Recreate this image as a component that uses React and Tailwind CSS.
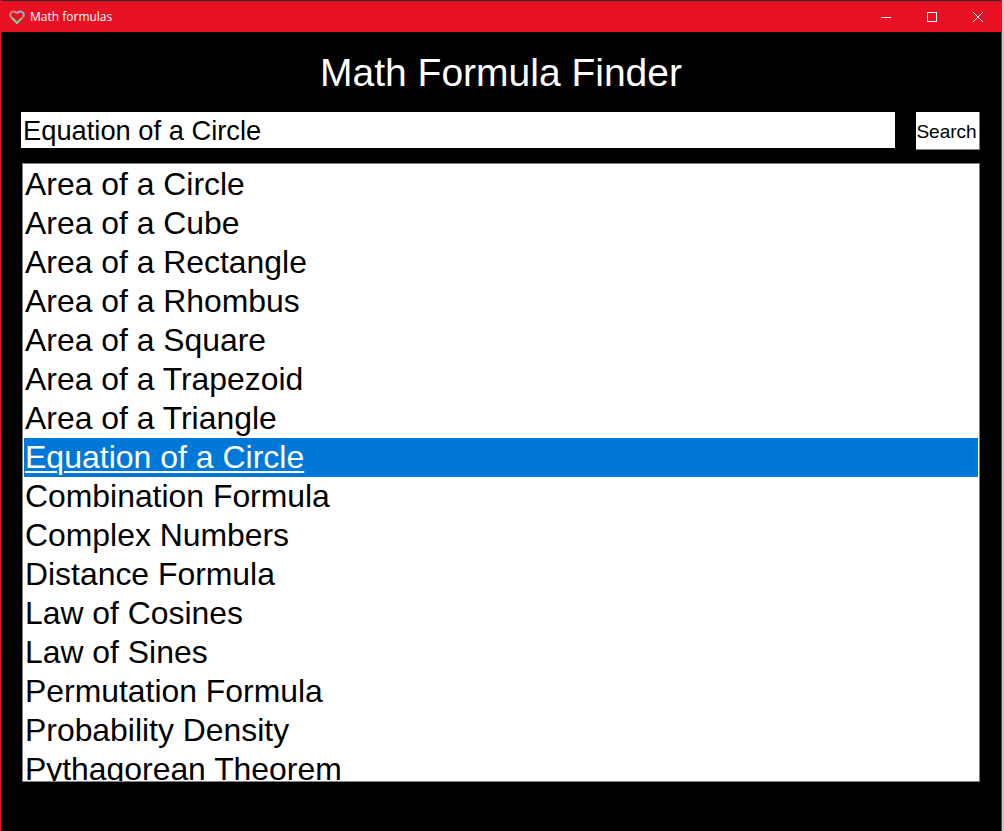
const formulas = [
  'Area of a Circle',
  'Area of a Cube',
  'Area of a Rectangle',
  'Area of a Rhombus',
  'Area of a Square',
  'Area of a Trapezoid',
  'Area of a Triangle',
  'Equation of a Circle',
  'Combination Formula',
  'Complex Numbers',
  'Distance Formula',
  'Law of Cosines',
  'Law of Sines',
  'Permutation Formula',
  'Probability Density',
  'Pythagorean Theorem',
];

function HeartIcon() {
  return (
    <svg width="16" height="16" viewBox="0 0 16 16" fill="none" strokeWidth="2">
      <path d="M8 14 L2.2 8.2 C0.4 6 1.6 2.4 4.6 2.4 C6 2.4 7.2 3.2 8 4.4" stroke="#c98a8a" />
      <path d="M8 4.4 C8.8 3.2 10 2.4 11.4 2.4 C14.4 2.4 15.6 6 13.8 8.2" stroke="#8fb4c9" />
      <path d="M2.6 8.6 L8 14 L13.4 8.6" stroke="#7fc9a0" />
    </svg>
  );
}

export default function App() {
  return (
    <div className="flex h-[831px] w-[1004px] overflow-hidden bg-[#c8c8c8] font-['Liberation_Sans',sans-serif]">
      <div className="flex h-full w-[1002px] flex-col border-x border-[#e81123] bg-black">
        {/* Title bar */}
        <div className="flex h-[32px] shrink-0 items-center border-t border-[#2b2b2b] bg-[#e81123] text-white">
          <div className="ml-[8px] flex items-center gap-[5px]">
            <HeartIcon />
            <span className="font-['Open_Sans',sans-serif] text-[12px]">Math formulas</span>
          </div>
          <div className="ml-auto flex items-center">
            <div className="flex h-[31px] w-[46px] items-center justify-center">
              <svg width="10" height="10" viewBox="0 0 10 10" stroke="white" fill="none">
                <path d="M0 5.5 H10" />
              </svg>
            </div>
            <div className="flex h-[31px] w-[46px] items-center justify-center">
              <svg width="10" height="10" viewBox="0 0 10 10" stroke="white" fill="none">
                <rect x="0.5" y="0.5" width="9" height="9" />
              </svg>
            </div>
            <div className="flex h-[31px] w-[46px] items-center justify-center">
              <svg width="10" height="10" viewBox="0 0 10 10" stroke="white" fill="none">
                <path d="M0 0 L10 10 M10 0 L0 10" />
              </svg>
            </div>
          </div>
        </div>

        <h1 className="mt-[17px] h-[47px] text-center text-[39px] leading-[48px] font-normal text-white">
          Math Formula Finder
        </h1>

        {/* Search row */}
        <div className="mt-[16px] flex items-start pl-[20px]">
          <div className="flex h-[36px] w-[874px] items-center bg-white pt-[3px] pl-[2px] text-[27.3px] text-black">
            Equation of a Circle
          </div>
          <button className="ml-[21px] h-[38px] w-[64px] border-r border-b border-[#808080] bg-white pt-[3px] pr-[2px] text-[19px] text-black">
            Search
          </button>
        </div>

        {/* Formula list */}
        <div className="mt-[13px] ml-[21px] h-[619px] w-[958px] overflow-hidden border border-[#808080] bg-white px-[1px] pt-[1px]">
          {formulas.map((name) => (
            <div
              key={name}
              className={
                name === 'Equation of a Circle'
                  ? 'h-[39px] bg-[#0078d7] pl-[1px] text-[32px] leading-[39px] text-white underline decoration-2 underline-offset-3'
                  : 'h-[39px] pl-[1px] text-[31.9px] leading-[39px] text-black'
              }
            >
              {name}
            </div>
          ))}
        </div>
      </div>
    </div>
  );
}
